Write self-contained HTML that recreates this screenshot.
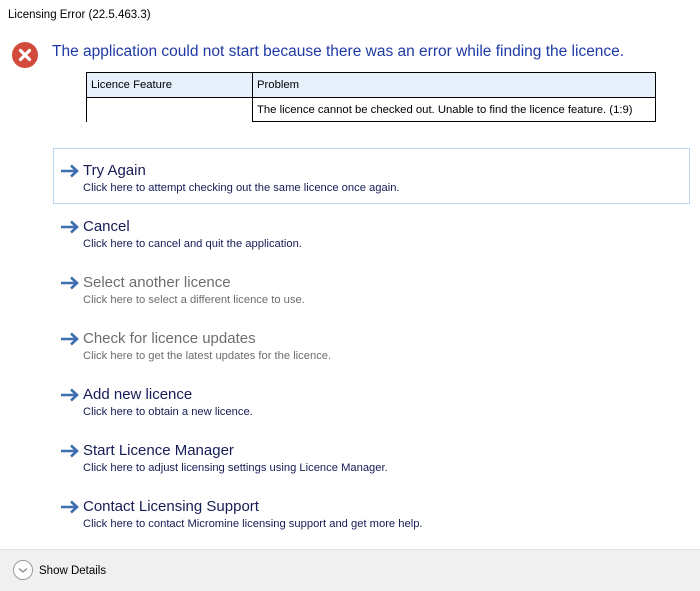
<!DOCTYPE html>
<html><head><style>
*{margin:0;padding:0;box-sizing:border-box}
body{width:700px;height:591px;background:#fff;font-family:"Liberation Sans",sans-serif;position:relative;overflow:hidden;color:#000}
.t{position:absolute;left:8px;top:9px;font-size:11.5px}
.icon{position:absolute;left:12px;top:42px;width:26px;height:26px;border-radius:50%;background:#d24b3a}
.h{position:absolute;left:52px;top:43px;font-size:15.5px;color:#1f3aa6;white-space:nowrap}
table{position:absolute;left:86px;top:72px;border-collapse:collapse;font-size:11.3px}
td{height:24px;padding:0 4px;white-space:nowrap}
.hd td{background:#e5f0fb;border:1px solid #000;height:25px}
.item{position:absolute;left:53px;width:637px;height:56px;padding:13px 0 0 29px;border:1px solid transparent}
.item.sel{border-color:#bcd8f0}
.item .a{position:absolute;left:6px;top:15px}
.item .tt{font-size:15px;color:#151c55;line-height:18px}
.item .d{font-size:11.2px;color:#151c55;margin-top:2px}
.dis .tt,.dis .d{color:#6d6d6d}
.foot{position:absolute;left:0;top:549px;width:700px;height:42px;background:#f0f0f0;border-top:1px solid #dfdfdf}
.foot .c{position:absolute;left:13px;top:10px;width:20px;height:20px;border:1px solid #9a9a9a;border-radius:50%;background:#fff}
.foot span{position:absolute;left:39px;top:15px;font-size:11.5px;color:#000}
</style></head><body>
<div class="t">Licensing Error (22.5.463.3)</div>
<div class="icon"><svg width="26" height="26"><path d="M8.5 8.5L17.5 17.5M17.5 8.5L8.5 17.5" stroke="#fff" stroke-width="3.2" stroke-linecap="round"/></svg></div>
<div class="h">The application could not start because there was an error while finding the licence.</div>
<table>
<tr class="hd"><td style="width:166px">Licence Feature</td><td style="width:403px">Problem</td></tr>
<tr><td style="border-left:1px solid #000"></td><td style="border:1px solid #000;border-top:0">The licence cannot be checked out. Unable to find the licence feature. (1:9)</td></tr>
</table>
<svg width="0" height="0" style="position:absolute"><defs><g id="ar"><path d="M1 7H17M11 1.5L17 7L11 12.5" stroke="#3d6fb0" stroke-width="2.6" fill="none"/></g></defs></svg>
<div class="item sel" style="top:148px"><svg class="a" width="20" height="14"><use href="#ar"/></svg><div class="tt">Try Again</div><div class="d">Click here to attempt checking out the same licence once again.</div></div>
<div class="item" style="top:204px"><svg class="a" width="20" height="14"><use href="#ar"/></svg><div class="tt">Cancel</div><div class="d">Click here to cancel and quit the application.</div></div>
<div class="item dis" style="top:260px"><svg class="a" width="20" height="14"><use href="#ar"/></svg><div class="tt">Select another licence</div><div class="d">Click here to select a different licence to use.</div></div>
<div class="item dis" style="top:316px"><svg class="a" width="20" height="14"><use href="#ar"/></svg><div class="tt">Check for licence updates</div><div class="d">Click here to get the latest updates for the licence.</div></div>
<div class="item" style="top:372px"><svg class="a" width="20" height="14"><use href="#ar"/></svg><div class="tt">Add new licence</div><div class="d">Click here to obtain a new licence.</div></div>
<div class="item" style="top:428px"><svg class="a" width="20" height="14"><use href="#ar"/></svg><div class="tt">Start Licence Manager</div><div class="d">Click here to adjust licensing settings using Licence Manager.</div></div>
<div class="item" style="top:484px"><svg class="a" width="20" height="14"><use href="#ar"/></svg><div class="tt">Contact Licensing Support</div><div class="d">Click here to contact Micromine licensing support and get more help.</div></div>
<div class="foot"><div class="c"><svg width="18" height="18"><path d="M5 7.5L9 11L13 7.5" stroke="#888" stroke-width="1.3" fill="none"/></svg></div><span>Show Details</span></div>
</body></html>
